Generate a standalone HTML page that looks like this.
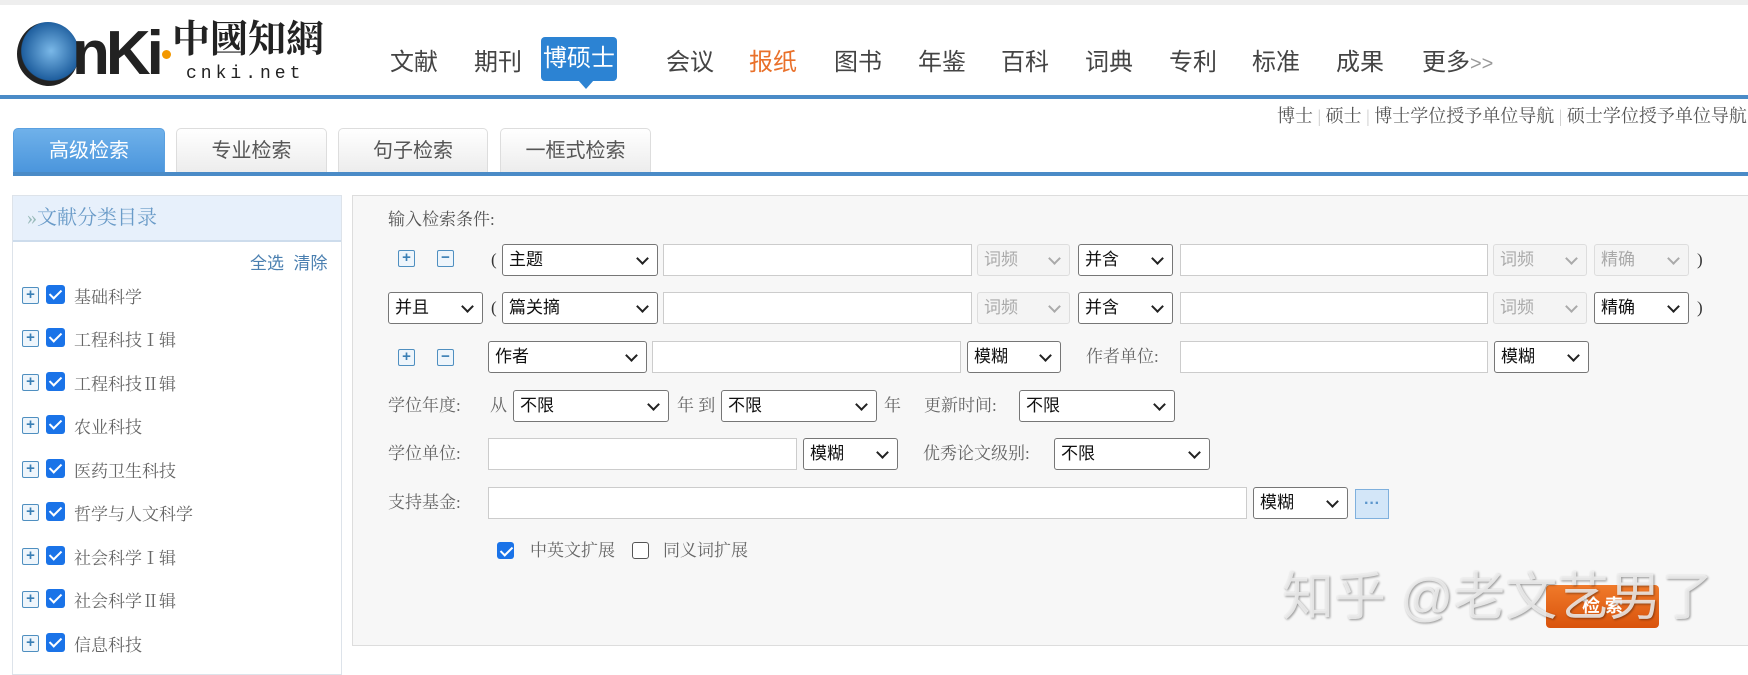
<!DOCTYPE html>
<html><head><meta charset="utf-8"><style>
*{margin:0;padding:0;box-sizing:border-box}
body{width:1748px;height:667px;position:relative;background:#fff;overflow:hidden;font-family:"Liberation Sans","Noto Sans CJK SC",sans-serif;color:#333}
.a{position:absolute}
.nav{font-size:24px;color:#444;top:48px;line-height:30px}
.serif{font-family:"Liberation Serif","Noto Serif CJK SC",serif}
.tab{position:absolute;top:128px;height:45px;border:1px solid #ddd;border-bottom:none;border-radius:5px 5px 0 0;background:linear-gradient(#fff,#ececec);font-size:20px;color:#555;text-align:center;line-height:45px}
.sel{position:absolute;height:32px;border:1px solid #767676;border-radius:3px;background:#fff;font-size:17px;color:#111;line-height:30px;padding-left:6px}
.sel:after{content:"";position:absolute;right:10px;top:9px;width:7px;height:7px;border-right:2px solid #222;border-bottom:2px solid #222;transform:rotate(45deg)}
.dis{background:#f4f4f4;border-color:#ddd;color:#aaa}
.dis:after{border-color:#aaa}
.inp{position:absolute;height:32px;border:1px solid #ccc;background:#fff}
.lb{position:absolute;font-size:17px;color:#666;font-family:"Liberation Serif","Noto Serif CJK SC",serif;line-height:20px}
.pm{position:absolute;width:17px;height:17px;border:1.5px solid #4f8fc0;border-radius:2px;background:#eef5fb;color:#3a7fb5;font-size:15px;line-height:13px;text-align:center;font-weight:bold}
.cb{position:absolute;width:19px;height:19px;background:#1a73e8;border-radius:3px}
.cb:after{content:"";position:absolute;left:6px;top:2px;width:5px;height:10px;border-right:2.5px solid #fff;border-bottom:2.5px solid #fff;transform:rotate(45deg)}
.tree{position:absolute;height:20px;font-size:17px;color:#666;font-family:"Liberation Serif","Noto Serif CJK SC",serif}
</style></head><body>
<div class="a" style="left:0;top:0;width:1748px;height:5px;background:#eee"></div>
<div class="a" style="left:17px;top:22px;width:62px;height:64px;border-radius:50%;background:radial-gradient(circle at 55% 45%,#7ab8e8,#1e5e9e 60%,#222 62%,#222 72%,transparent 73%)"></div>
<div class="a" style="left:72px;top:22px;font-size:62px;font-weight:bold;color:#222;line-height:64px;letter-spacing:-4px;font-family:'Liberation Sans',sans-serif">nKi</div>
<div class="a" style="left:162px;top:50px;width:9px;height:9px;border-radius:50%;background:#f39800"></div>
<div class="a serif" style="left:172px;top:18px;font-size:38px;color:#222;line-height:44px;font-weight:bold">中國知網</div>
<div class="a" style="left:186px;top:64px;font-size:18px;color:#222;letter-spacing:4px;line-height:20px;font-family:'Liberation Mono',monospace">cnki.net</div>
<div class="a nav" style="left:390px">文献</div>
<div class="a nav" style="left:474px">期刊</div>
<div class="a" style="left:541px;top:37px;width:76px;height:44px;background:#2c83d3;border-radius:4px;color:#fff;font-size:24px;line-height:44px;text-align:center">博硕士</div>
<div class="a" style="left:586px;top:80px;width:0;height:0;border-left:8px solid transparent;border-right:8px solid transparent;border-top:9px solid #2c83d3;margin-left:-8px"></div>
<div class="a nav" style="left:666px">会议</div>
<div class="a nav" style="left:749px;color:#e9702a">报纸</div>
<div class="a nav" style="left:834px">图书</div>
<div class="a nav" style="left:918px">年鉴</div>
<div class="a nav" style="left:1001px">百科</div>
<div class="a nav" style="left:1085px">词典</div>
<div class="a nav" style="left:1169px">专利</div>
<div class="a nav" style="left:1252px">标准</div>
<div class="a nav" style="left:1336px">成果</div>
<div class="a nav" style="left:1422px">更多<span style="font-size:20px;color:#999">&gt;&gt;</span></div>
<div class="a" style="left:0;top:95px;width:1748px;height:4px;background:#4a8bc7"></div>
<div class="a serif" style="left:1277px;top:105px;font-size:18px;color:#555;white-space:nowrap;line-height:22px">博士 <span style="color:#ccc">|</span> 硕士 <span style="color:#ccc">|</span> 博士学位授予单位导航 <span style="color:#ccc">|</span> 硕士学位授予单位导航</div>
<div class="tab" style="left:13px;width:152px;background:linear-gradient(#6fb1ea,#4a95dc);color:#fff;border-color:#5aa0e0">高级检索</div>
<div class="tab" style="left:176px;width:151px">专业检索</div>
<div class="tab" style="left:338px;width:150px">句子检索</div>
<div class="tab" style="left:500px;width:151px">一框式检索</div>
<div class="a" style="left:13px;top:172px;width:1735px;height:4px;background:#4a8bc7"></div>
<div class="a" style="left:12px;top:195px;width:330px;height:480px;border:1px solid #dde3ea"></div>
<div class="a" style="left:13px;top:196px;width:328px;height:46px;background:#e7f0fb;border-bottom:2px solid #cddcec;font-size:20px;color:#6a9bc8;line-height:44px;padding-left:14px;font-family:'Liberation Serif','Noto Serif CJK SC',serif"><span style="color:#9bb">»</span>文献分类目录</div>
<div class="a" style="left:250px;top:249px;font-size:17px;color:#4a7fb0">全选&nbsp; 清除</div>
<div class="pm" style="left:22px;top:287px">+</div><div class="cb" style="left:46px;top:285px"></div><div class="tree" style="left:74px;top:283px">基础科学</div>
<div class="pm" style="left:22px;top:330px">+</div><div class="cb" style="left:46px;top:328px"></div><div class="tree" style="left:74px;top:326px">工程科技Ⅰ辑</div>
<div class="pm" style="left:22px;top:374px">+</div><div class="cb" style="left:46px;top:372px"></div><div class="tree" style="left:74px;top:370px">工程科技Ⅱ辑</div>
<div class="pm" style="left:22px;top:417px">+</div><div class="cb" style="left:46px;top:415px"></div><div class="tree" style="left:74px;top:413px">农业科技</div>
<div class="pm" style="left:22px;top:461px">+</div><div class="cb" style="left:46px;top:459px"></div><div class="tree" style="left:74px;top:457px">医药卫生科技</div>
<div class="pm" style="left:22px;top:504px">+</div><div class="cb" style="left:46px;top:502px"></div><div class="tree" style="left:74px;top:500px">哲学与人文科学</div>
<div class="pm" style="left:22px;top:548px">+</div><div class="cb" style="left:46px;top:546px"></div><div class="tree" style="left:74px;top:544px">社会科学Ⅰ辑</div>
<div class="pm" style="left:22px;top:591px">+</div><div class="cb" style="left:46px;top:589px"></div><div class="tree" style="left:74px;top:587px">社会科学Ⅱ辑</div>
<div class="pm" style="left:22px;top:635px">+</div><div class="cb" style="left:46px;top:633px"></div><div class="tree" style="left:74px;top:631px">信息科技</div>
<div class="a" style="left:352px;top:195px;width:1400px;height:451px;background:#f7f7f7;border:1px solid #ddd"></div>
<div class="lb" style="left:388px;top:210px;color:#555">输入检索条件:</div>
<div class="pm" style="left:398px;top:250px">+</div><div class="pm" style="left:437px;top:250px">−</div>
<div class="lb" style="left:491px;top:250px;color:#333">(</div>
<div class="sel" style="left:502px;top:244px;width:156px">主题</div>
<div class="inp" style="left:663px;top:244px;width:309px"></div>
<div class="sel dis" style="left:977px;top:244px;width:93px">词频</div>
<div class="sel" style="left:1078px;top:244px;width:95px">并含</div>
<div class="inp" style="left:1180px;top:244px;width:308px"></div>
<div class="sel dis" style="left:1493px;top:244px;width:94px">词频</div>
<div class="sel dis" style="left:1594px;top:244px;width:95px">精确</div>
<div class="lb" style="left:1697px;top:250px;color:#333">)</div>
<div class="sel" style="left:388px;top:292px;width:95px">并且</div>
<div class="lb" style="left:491px;top:298px;color:#333">(</div>
<div class="sel" style="left:502px;top:292px;width:156px">篇关摘</div>
<div class="inp" style="left:663px;top:292px;width:309px"></div>
<div class="sel dis" style="left:977px;top:292px;width:93px">词频</div>
<div class="sel" style="left:1078px;top:292px;width:95px">并含</div>
<div class="inp" style="left:1180px;top:292px;width:308px"></div>
<div class="sel dis" style="left:1493px;top:292px;width:94px">词频</div>
<div class="sel" style="left:1594px;top:292px;width:95px">精确</div>
<div class="lb" style="left:1697px;top:298px;color:#333">)</div>
<div class="pm" style="left:398px;top:349px">+</div><div class="pm" style="left:437px;top:349px">−</div>
<div class="sel" style="left:488px;top:341px;width:159px">作者</div>
<div class="inp" style="left:652px;top:341px;width:309px"></div>
<div class="sel" style="left:967px;top:341px;width:94px">模糊</div>
<div class="lb" style="left:1086px;top:347px">作者单位:</div>
<div class="inp" style="left:1180px;top:341px;width:308px"></div>
<div class="sel" style="left:1494px;top:341px;width:95px">模糊</div>
<div class="lb" style="left:388px;top:396px">学位年度:</div>
<div class="lb" style="left:490px;top:396px">从</div>
<div class="sel" style="left:513px;top:390px;width:156px">不限</div>
<div class="lb" style="left:677px;top:396px">年 到</div>
<div class="sel" style="left:721px;top:390px;width:156px">不限</div>
<div class="lb" style="left:884px;top:396px">年</div>
<div class="lb" style="left:924px;top:396px">更新时间:</div>
<div class="sel" style="left:1019px;top:390px;width:156px">不限</div>
<div class="lb" style="left:388px;top:444px">学位单位:</div>
<div class="inp" style="left:488px;top:438px;width:309px"></div>
<div class="sel" style="left:803px;top:438px;width:95px">模糊</div>
<div class="lb" style="left:923px;top:444px">优秀论文级别:</div>
<div class="sel" style="left:1054px;top:438px;width:156px">不限</div>
<div class="lb" style="left:388px;top:493px">支持基金:</div>
<div class="inp" style="left:488px;top:487px;width:759px"></div>
<div class="sel" style="left:1253px;top:487px;width:95px">模糊</div>
<div class="a" style="left:1355px;top:489px;width:34px;height:30px;background:#d3e6f8;border:1px solid #7fb0dd;color:#5c96cc;font-size:16px;text-align:center;line-height:28px;font-weight:bold">···</div>
<div class="cb" style="left:497px;top:542px;width:17px;height:17px"></div>
<div class="lb" style="left:530px;top:541px">中英文扩展</div>
<div class="a" style="left:632px;top:542px;width:17px;height:17px;border:1.5px solid #555;border-radius:3px;background:#fff"></div>
<div class="lb" style="left:663px;top:541px">同义词扩展</div>
<div class="a" style="left:1546px;top:585px;width:113px;height:43px;background:linear-gradient(#f07a2a,#d9530c);border-radius:4px;color:#fff;font-size:18px;text-align:center;line-height:43px;font-weight:bold">检 索</div>
<div class="a" style="left:1282px;top:568px;font-size:52px;color:rgba(240,240,240,0.85);text-shadow:1px 1px 2px rgba(0,0,0,0.4);white-space:nowrap;line-height:60px">知乎 @老文艺男了</div>
</body></html>
